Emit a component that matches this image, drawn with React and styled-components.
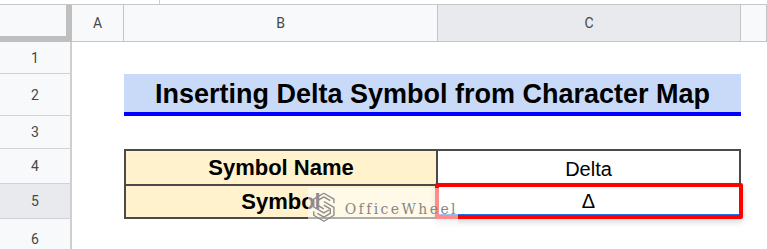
import React from 'react';
import styled, { createGlobalStyle } from 'styled-components';

const GlobalStyle = createGlobalStyle`
  body {
    margin: 0;
    background: #ffffff;
    font-family: Arial, "Liberation Sans", sans-serif;
  }
`;

const COLUMNS = '72px 52px 314px 303px 1fr';

const Sheet = styled.div`
  position: relative;
  width: 767px;
  height: 249px;
  overflow: hidden;
  background: #ffffff;
`;

const FormulaStrip = styled.div`
  display: grid;
  grid-template-columns: 160px 1fr;
  height: 4px;
  border-bottom: 1px solid #c7c7c7;
  span:first-child {
    border-right: 1px solid #d0d0d0;
  }
`;

const Row = styled.div`
  display: grid;
  grid-template-columns: ${COLUMNS};
  height: ${(p) => p.$h}px;
`;

const Corner = styled.div`
  box-sizing: border-box;
  background: #f8f9fa;
  border-right: 6px solid #bfbfbf;
  border-bottom: 6px solid #bfbfbf;
`;

const ColHead = styled.div`
  box-sizing: border-box;
  display: flex;
  align-items: center;
  justify-content: center;
  background: ${(p) => (p.$active ? '#e8eaed' : '#f8f9fa')};
  border-right: 1px solid #c4c4c4;
  border-bottom: 1px solid #c4c4c4;
  font-family: Roboto, Arial, sans-serif;
  font-size: 14px;
  color: #444746;
`;

const RowHead = styled.div`
  box-sizing: border-box;
  display: flex;
  align-items: center;
  justify-content: center;
  background: ${(p) => (p.$active ? '#e8eaed' : '#f8f9fa')};
  border-right: 2px solid #cfcfcf;
  border-bottom: 1px solid #d2d2d2;
  font-family: Roboto, Arial, sans-serif;
  font-size: 14px;
  color: #444746;
`;

const Cell = styled.div`
  box-sizing: border-box;
  display: flex;
  align-items: center;
  justify-content: center;
  background: ${(p) => p.$fill || 'transparent'};
  font-size: ${(p) => p.$size || 20}px;
  font-weight: ${(p) => (p.$bold ? 700 : 400)};
  color: #000000;
`;

const Title = styled(Cell)`
  grid-column: 3 / 5;
  background: #c9daf8;
  border-bottom: 4px solid #0000ff;
  font-size: 27px;
  font-weight: 700;
  padding-top: 2px;
`;

const TableCell = styled(Cell)`
  position: relative;
  border-top: 2px solid #4a4a4a;
  border-left: ${(p) => (p.$first ? '2px solid #4a4a4a' : 'none')};
  border-right: 2px solid #4a4a4a;
  border-bottom: ${(p) => (p.$last ? '2px solid #4a4a4a' : 'none')};
  padding-top: ${(p) => p.$pt || 0}px;

  ${(p) =>
    p.$selected &&
    `
    &::after {
      content: '';
      position: absolute;
      left: -3px;
      right: -4px;
      top: -3px;
      bottom: -2px;
      border: 4px solid #ff0000;
      border-radius: 2px;
      box-shadow: 0 3px 6px rgba(0, 0, 0, 0.16), inset 0 -1px 0 #1a73e8;
    }
  `}
`;

const Watermark = styled.div`
  position: absolute;
  left: 308px;
  top: 188px;
  width: 150px;
  height: 37px;
  display: flex;
  align-items: center;
  gap: 8px;
  padding-left: 3px;
  box-sizing: border-box;
  background: rgba(255, 255, 255, 0.55);
`;

const MarkText = styled.span`
  font-family: "DejaVu Serif", "Liberation Serif", serif;
  font-size: 14px;
  letter-spacing: 2.4px;
  color: #878787;
  margin-top: 4px;
`;

// stacked isometric "S" of the watermark logo
function LogoMark() {
  return (
    <svg width="30" height="36" viewBox="0 0 28 34" fill="none" stroke="#8c8c8c" strokeWidth="1.5" strokeLinejoin="round">
      <path d="M14 2 L25 8.5 L25 13" />
      <path d="M14 2 L3 8.5 L3 17 L14 23.5 L20 20" />
      <path d="M14 6 L21 10 M14 6 L7 10 L7 15 L14 19" />
      <path d="M14 11 L25 17.5 L25 26 L14 32.5 L3 26 L3 21.5" />
      <path d="M14 15 L21 19 L21 24 L14 28 L7 24" />
    </svg>
  );
}

export default function App() {
  return (
    <Sheet>
      <GlobalStyle />
      <FormulaStrip>
        <span />
        <span />
      </FormulaStrip>

      <Row $h={37}>
        <Corner />
        <ColHead>A</ColHead>
        <ColHead>B</ColHead>
        <ColHead $active>C</ColHead>
        <ColHead />
      </Row>

      <Row $h={32}>
        <RowHead>1</RowHead>
      </Row>

      <Row $h={42}>
        <RowHead>2</RowHead>
        <Cell />
        <Title>Inserting Delta Symbol from Character Map</Title>
      </Row>

      <Row $h={33}>
        <RowHead>3</RowHead>
      </Row>

      <Row $h={35}>
        <RowHead>4</RowHead>
        <Cell />
        <TableCell $first $fill="#fff2cc" $bold $size={22}>Symbol Name</TableCell>
        <TableCell $pt={4}>Delta</TableCell>
      </Row>

      <Row $h={35}>
        <RowHead $active>5</RowHead>
        <Cell />
        <TableCell $first $last $fill="#fff2cc" $bold $size={22}>Symbol</TableCell>
        <TableCell $last $selected>Δ</TableCell>
      </Row>

      <Row $h={40}>
        <RowHead>6</RowHead>
      </Row>

      <Watermark>
        <LogoMark />
        <MarkText>OfficeWheel</MarkText>
      </Watermark>
    </Sheet>
  );
}
